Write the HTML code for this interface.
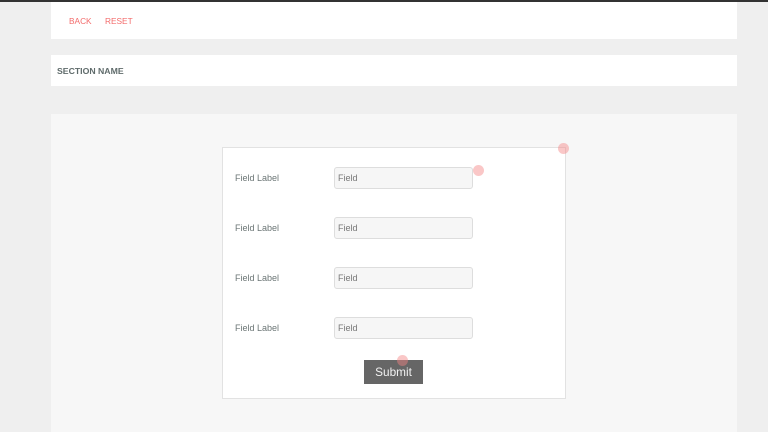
<!DOCTYPE html>
<html><head><style>
body{margin:0;width:768px;height:432px;background:#efefef;font-family:"Liberation Sans",sans-serif;position:relative;overflow:hidden}
.a{position:absolute}
.top{left:0;top:0;width:768px;height:2px;background:#333;z-index:5}
.p1{left:51px;top:0;width:686px;height:39px;background:#fff}
.lnk{top:16px;font-size:8.3px;color:#f36b6b}
.p2{left:51px;top:55px;width:686px;height:31px;background:#fff}
.sec{left:57px;top:66px;font-size:8.7px;font-weight:bold;color:#5f6b6b}
.p3{left:51px;top:114px;width:686px;height:318px;background:#f7f7f7}
.form{left:222px;top:147px;width:342px;height:250px;background:#fff;border:1px solid #e2e2e2}
.lab{left:235px;font-size:9px;color:#6b7575}
.inp{left:334px;width:137px;height:20px;background:#f6f6f6;border:1px solid #ddd;border-radius:3px;font-size:9px;color:#777;line-height:20px;text-indent:3px}
.btn{left:364px;top:360px;width:59px;height:24px;background:#666;color:#f2f2f2;font-size:11.8px;text-align:center;line-height:24px}
.dot{width:11px;height:11px;border-radius:50%;background:rgba(245,130,130,.45)}
</style></head><body>
<div class="a top"></div>
<div class="a p1"></div>
<div class="a lnk" style="left:69px">BACK</div>
<div class="a lnk" style="left:105px">RESET</div>
<div class="a p2"></div>
<div class="a sec">SECTION NAME</div>
<div class="a p3"></div>
<div class="a form"></div>
<div class="a lab" style="top:173px">Field Label</div><div class="a inp" style="top:167px">Field</div>
<div class="a lab" style="top:223px">Field Label</div><div class="a inp" style="top:217px">Field</div>
<div class="a lab" style="top:273px">Field Label</div><div class="a inp" style="top:267px">Field</div>
<div class="a lab" style="top:323px">Field Label</div><div class="a inp" style="top:317px">Field</div>
<div class="a btn">Submit</div>
<div class="a dot" style="left:558px;top:143px"></div>
<div class="a dot" style="left:473px;top:165px"></div>
<div class="a dot" style="left:397px;top:355px"></div>
</body></html>
